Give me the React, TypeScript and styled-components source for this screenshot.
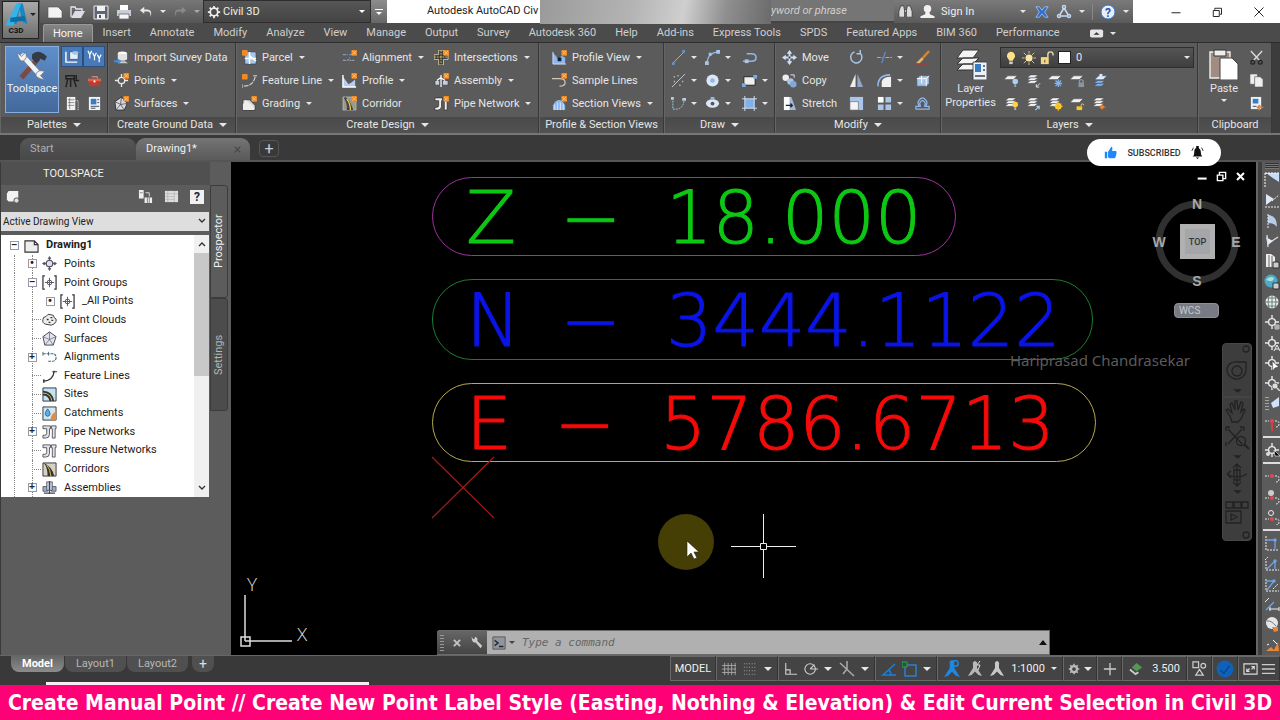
import React, { ReactNode } from 'react';
import styled, { createGlobalStyle, css } from 'styled-components';

const UI = `Roboto, "Noto Sans", sans-serif`;

const Global = createGlobalStyle`
  * { box-sizing: border-box; }
  html, body { margin: 0; height: 100%; background: #383838; }
  body { font: 11px/14px ${UI}; color: #e6e6e6; overflow: hidden; }
  button, input, select { font: inherit; color: inherit; margin: 0; padding: 0; border: 0; background: none; }
  button { cursor: default; white-space: nowrap; }
  svg { display: block; flex: none; }
`;

/* ---------- icon drawings, all on a 16 x 16 grid ---------- */
const W = '#e8e8e8';
const B = '#8fb8e8';
const O = '#f08a24';
const spark = (
  <g>
    <rect x="10" y="0" width="6" height="6" rx="1" fill={O} />
    <path d="M11 1l4 4M15 1l-4 4" stroke="#ffc27a" strokeWidth="1" />
  </g>
);
const sheets = (fill: string) => (
  <g fill={fill} stroke="#444" strokeWidth=".5">
    <path d="M1 11l4-3h8l-4 3z" />
    <path d="M1 8l4-3h8l-4 3z" />
    <path d="M1 5l4-3h8l-4 3z" />
  </g>
);
const target = (c: string) => (
  <g fill="none" stroke={c} strokeWidth="1.4">
    <circle cx="8" cy="8" r="3.4" />
    <path d="M8 1v4M8 11v4M1 8h4M11 8h4" />
  </g>
);
const red = (
  <g>
    <path d="M1 5h4M11 5h2q2 0 2 3t-3 3" fill="none" stroke={W} strokeDasharray="2 1" />
    <circle cx="8" cy="5" r="2" fill="#e8454f" />
  </g>
);
const pipe = (c: string) => (
  <g fill={c} stroke="#333" strokeWidth=".8">
    <path d="M1 2h8v3H8v6q0 4-4 4H1v-3h2q2 0 2-2V5H1z" />
    <path d="M10 2h5v3h-1v10h-3V5h-1z" />
  </g>
);
const person = (c: string) => (
  <path d="M8 0a2.500 2.500 0 0 1 2 3.400L10 7l5 8-3.500-1L8 10.500 4.500 14 1 15l5-8V3.400A2.500 2.500 0 0 1 8 0z" fill={c} />
);

const glyphs: Record<string, ReactNode> = {
  newFile: <path d="M1 3h10l4 4v7H1z" fill="#f3f3f3" stroke="#555" strokeWidth=".6" />,
  open: <g><path d="M1 13V3h4l1 2h6v2" fill="none" stroke={W} strokeWidth="1.3" /><path d="M1 14l4-7h10l-4 7z" fill="#d8dde6" /></g>,
  save: <g><path d="M1 2h14v13H1z" fill="#5d6675" stroke={W} /><path d="M4 2h8v5H4zM4 10h8v5H4z" fill="#f2f2f2" /><path d="M6 11h2v3H6z" fill="#555" /></g>,
  print: <g><path d="M4 1h8v5H4z" fill="#fff" /><path d="M1 6h14v6H1z" fill="#c9ced6" /><path d="M3 10h10v5H3z" fill="#f5f5f5" stroke="#667" strokeWidth=".8" /></g>,
  undo: <path d="M6 2L1 6l5 4V7.500h4q3 0 3 4V14q3-8-3-9H6z" fill={W} />,
  redo: <path d="M10 2l5 4-5 4V7.500H6q-3 0-3 4V14Q0 6 6 5h4z" fill="#8a8a8a" />,
  gear: <g fill="none" stroke="#eee"><circle cx="8" cy="8" r="4.300" strokeWidth="2" /><path d="M8 1v3M8 12v3M1 8h3M12 8h3M3 3l2 2M11 11l2 2M13 3l-2 2M5 11l-2 2" strokeWidth="2" /></g>,
  binoc: <g fill="#ddd" stroke="#333" strokeWidth=".7"><path d="M3 2h3l1 5v7H1V8zM10 2h3l2 6v6H9V7z" /><path d="M7 6h2v3H7z" /></g>,
  user: <g fill="#f0f0f0"><circle cx="8" cy="5" r="4" /><path d="M6 8h4l.5 3 5 2v2H.5v-2l5-2z" /></g>,
  exchange: <path d="M1 2h4l3 4 3-4h4l-4 6 4 6h-4l-3-4-3 4H1l4-6z" fill="#2f6fd0" stroke="#cfe0ff" strokeWidth=".7" />,
  tri: <g fill="none" stroke="#c8daf5" strokeWidth="1.500"><path d="M8 4l5 8H3z" /><circle cx="8" cy="3" r="1.500" fill="#556" /><circle cx="3" cy="12" r="1.500" fill="#556" /><circle cx="13" cy="12" r="1.500" fill="#556" /></g>,
  help: <g><circle cx="8" cy="8" r="7" fill="#e8eefb" stroke="#3e6fc0" /><text x="8" y="12.500" fontSize="12" fontWeight="700" textAnchor="middle" fill="#2a58b0">?</text></g>,
  logo: <g><path d="M5 14L9 1h3l3 13-3-1-2-8-2 9z" fill="#1787c4" /><path d="M1 15L8 1h3L6 15z" fill="#36b4e6" /><path d="M4 10l9-1 1 3-10 1z" fill="#0e6da5" /></g>,

  tools: <g><path d="M3 14L11 5" stroke="#7d4a42" strokeWidth="2.400" /><path d="M8 3q3-3 7 1l-1 2-2-1-2 2-2-2z" fill="#333b44" /><path d="M3 3l9 10" stroke="#f2f2f2" strokeWidth="2.200" /><path d="M1 2l2 2 2-2q1 3-1 4T1 2zM14 15l-2-2 2-2q-3-1-4 1t4 3z" fill="#f2f2f2" stroke="#777" strokeWidth=".4" /></g>,
  tsA: <g><path d="M1 3v11h12" fill="none" stroke="#fff" strokeWidth="1.500" /><path d="M5 3h9v8H5z" fill="#e9f0fa" stroke="#234" strokeWidth=".6" /><ellipse cx="11" cy="4" rx="3.500" ry="2" fill="#9fc6ef" /></g>,
  yyy: <path d="M1 2l2 4 2-4M3 6v4M6 4l2 4 2-4M8 8v4M11 6l2 4 2-4M13 10v4" fill="none" stroke="#fff" strokeWidth="1.300" />,
  survey: <path d="M1 3h9v3H1zM3 6l-2 9M6 6v9M9 6l3 9M12 2v5M10 8h5" fill="none" stroke="#222" strokeWidth="1.600" />,
  toolbox: <g><path d="M5 4h6v2" fill="none" stroke="#e8a49b" /><path d="M1 6h14v3H1z" fill="#e0614d" /><path d="M2 9h12v5H2z" fill="#c23b2a" /><path d="M7 8h2v2H7z" fill="#fff" /></g>,
  sheetA: <g><path d="M2 1h9v14H2z" fill="#f2f2f2" /><path d="M3 4h7M3 7h7M3 10h7M5 2v12" stroke="#777" strokeWidth=".8" /><path d="M11 5h3v10" stroke={W} fill="none" strokeDasharray="1 1" /></g>,
  sheetB: <g><path d="M2 1h12v14H2z" fill="#eef3fa" /><path d="M4 3h6v6H4z" fill="#3b7bc4" /><path d="M11 4h2M11 7h2M4 11h9M4 13h5" stroke="#444" strokeWidth="1" /></g>,
  importS: <g><ellipse cx="9" cy="4" rx="5" ry="2.500" fill="#fff" /><path d="M4 4h10v6q-5 3-10 0z" fill="#e2e2e2" /><path d="M6 12h6l3 2H5z" fill="#ccc" /><path d="M0 11h4V9l4 3-4 3v-2H0z" fill="#3d8fe0" /></g>,
  points: <g>{target(W)}{spark}</g>,
  surface: <g><path d="M1 6l7-5 6 7-3 7H2z" fill="#d6dbe4" stroke="#333" /><path d="M1 6l6 3 7-1M7 9L2 15M7 9l4 6M7 9l1-8" stroke="#444" fill="none" strokeWidth=".8" />{spark}</g>,
  parcel: <g><path d="M3 2h12v13H3z" fill="#a9c6e6" stroke="#345" strokeWidth=".8" /><path d="M8 2v13M3 9h12M8 6l7 6" stroke="#fff" strokeWidth="1.500" /><rect x="0" y="0" width="6" height="6" rx="1" fill={O} /></g>,
  fline: <g><path d="M2 14q10 0 12-10" fill="none" stroke="#ccc" strokeWidth="1.300" strokeDasharray="5 1" /><path d="M12 3h4M0 12v4" stroke={W} /><rect x="0" y="1" width="6" height="6" rx="1" fill={O} /></g>,
  grading: <g><path d="M1 4h7l6 6v5H1z" fill="#d9d9d9" stroke="#333" strokeWidth=".8" /><path d="M4 4l9 8v3H1V9z" fill="#eee" />{spark}</g>,
  align: <g><path d="M1 5h5M8 5h3M1 11h4q3 0 3-3" fill="none" stroke={B} strokeDasharray="3 1" /><path d="M8 11h6" stroke="#bbb" strokeDasharray="2 1" />{spark}</g>,
  profile: <g><path d="M1 3v12h13V7l-4 3-3 2-3-4-3-4z" fill="#b7cdf0" /><path d="M1 2v13h14" stroke="#fff" fill="none" strokeWidth="1.500" />{spark}</g>,
  corridor: <g><path d="M1 1h14v14H1z" fill="#9a9a8c" stroke="#ccc" strokeWidth=".6" /><path d="M4 1q6 6 8 14H5Q6 8 2 2z" fill="#444" /><path d="M5 3q4 5 4 12" stroke="#f5cf3a" fill="none" strokeWidth="1.300" />{spark}</g>,
  inter: <g><path d="M5 0h5v5h5v5h-5v6H5v-6H0V5h5z" fill="#333" stroke="#cfc9b0" /><path d="M7.500 0v15M0 7.500h15" stroke="#f3d060" strokeDasharray="2 1" />{spark}</g>,
  assembly: <g><path d="M1 8h5v5H1zM9 8h6v5H9z" fill="#c3cfe0" stroke="#333" strokeWidth=".7" /><path d="M7.500 2v13M3 8l4-3 5 3" stroke="#fff" fill="none" strokeWidth="1.300" />{spark}</g>,
  pipes: <g>{pipe('#f0f0f0')}{spark}</g>,
  pview: <g><path d="M1 3v12h13V8l-4-2-3 4-3-4z" fill="#8fb4ee" /><path d="M1 2v13h14" stroke="#cfe0ff" fill="none" /><path d="M6 8h4v4H6z" fill="#123" />{spark}</g>,
  sline: <g><path d="M0 6h8q6 0 6 4t-6 4" fill="none" stroke="#d0c8b8" strokeWidth="1.300" />{spark}</g>,
  sview: <g><path d="M1 10q4-8 10-5l3 5v5H1z" fill="#8fb8ee" /><path d="M3 9v6M6 7v8M9 7v8M12 8v7" stroke="#eef" strokeWidth=".8" />{spark}</g>,

  line: <g><path d="M2 14L14 2" stroke={B} /><path d="M1 13h3v3H1zM12 0h3v3h-3z" fill="#6b8fc0" /></g>,
  pline: <g><path d="M2 14Q3 3 14 2" fill="none" stroke={B} strokeWidth="1.500" /><path d="M0 12h4v4H0zM12 0h4v4h-4zM4 3h3v3H4z" fill="#a9c6ea" /></g>,
  arc: <g><path d="M1 12h4M4 12h6q5 0 5-4t-5-4H5" fill="none" stroke={B} strokeWidth="1.600" /><path d="M3 10h4v4H3z" fill="#a9c6ea" /></g>,
  xline: <g><path d="M1 15L15 1" stroke="#ccc" /><path d="M3 4h1M7 3h1M12 9h1M9 13h1M3 9h1" stroke="#ddd" strokeWidth="1.500" /></g>,
  circle: <g><circle cx="8" cy="8" r="6.500" fill="#dce6f4" /><circle cx="8" cy="8" r="2.500" fill="#8fb8e8" /></g>,
  rect: <g><path d="M2 4h12v9H2z" fill="#f1f1f1" stroke="#222" /><path d="M0 11h4v4H0zM12 2h4v4h-4z" fill="#7fa8dc" /></g>,
  spline: <g><path d="M2 2v12h5Q14 12 14 3" fill="none" stroke="#9cd0e0" strokeDasharray="2 1" /><path d="M12 2h4v3h-4zM0 1h3v3H0z" fill="#bcd" /></g>,
  ellipse: <g><ellipse cx="8" cy="8" rx="7" ry="4.500" fill="#dce6f4" /><circle cx="8" cy="8" r="2" fill="#555" /><path d="M6 1h4v3H6z" fill="#8fb8e8" /></g>,
  hatch: <g><path d="M3 3h10v10H3z" fill="#7fb0ea" /><path d="M3 0v16M13 0v16M0 3h16M0 13h16" stroke="#d5e3f5" /></g>,
  move: <g><path d="M8 0l3 4H9v3h3V5l4 3-4 3V9H9v3h2l-3 4-3-4h2V9H4v2L0 8l4-3v2h3V4H5z" fill="#cfe0f6" /><path d="M7 7h2v2H7z" fill="#333" /></g>,
  copy: <g><circle cx="4" cy="5" r="3.500" fill="#eee" /><circle cx="9" cy="9" r="3.500" fill="#a9c6ea" /><circle cx="12" cy="12" r="3.500" fill="#7fa8dc" /><path d="M9 2h4v3" stroke={W} fill="none" /></g>,
  stretch: <g><path d="M7 1h3l5 14H7z" fill="#9fb9d8" /><path d="M2 1h6v14H2z" fill="#fff" /><path d="M4 10h7M9 8l2 2-2 2" stroke="#222" fill="none" strokeWidth="1.400" /></g>,
  rotate: <path d="M6 2a6 6 0 1 0 6 1.500M12 0v4H8" fill="none" stroke="#a9c6ea" strokeWidth="1.600" />,
  mirror: <g><path d="M7 1v14H1z" fill="#eee" /><path d="M9 1v14h6z" fill="#8fa8c8" /></g>,
  scale: <g><path d="M1 1h14v14H1z" fill="#a9c6ea" /><path d="M1 6h9v9H1z" fill="#f4f4f4" stroke="#555" strokeWidth=".6" /></g>,
  trim: <g><path d="M0 8h6M9 8h7" stroke={B} strokeDasharray="4 1" /><path d="M5 14L9 2" stroke="#5f8fd0" strokeWidth="1.400" /></g>,
  fillet: <g><path d="M5 15V9q1-5 10-5v11z" fill="#f0f0f0" /><path d="M1 14Q1 2 14 2" fill="none" stroke={B} strokeWidth="1.700" /></g>,
  array: <g fill="#a9c6ea"><path d="M1 1h6v6H1z" fill="#fff" /><path d="M9 1h6v6H9zM1 9h6v6H1zM9 9h6v6H9z" /></g>,
  erase: <g><path d="M15 1L7 10" stroke="#d9822b" strokeWidth="2.600" /><path d="M7 8l2 2-4 4H1z" fill="#e8b36d" /><path d="M1 15h12" stroke="#b33" /></g>,
  explode: <g><path d="M2 6l3-3h10v8l-3 3H2z" fill="#a9c6ea" stroke="#456" strokeWidth=".6" /><path d="M2 6h10v8M12 6l3-3M7 3v8" stroke="#fff" fill="none" /></g>,
  offset: <g fill="none" stroke={B} strokeWidth="1.300"><path d="M1 14h14v-3h-4q3-3 1-6-4-6-8 0-2 3 1 6H1z" /><path d="M6 11q-2-3 0-5 2-2 4 0 2 2 0 5" /></g>,

  layerProps: <g><path d="M1 11l3-3h8l-3 3zM1 8l3-3h8L9 8zM1 5l3-4h8L9 5z" fill="#f4f4f4" stroke="#333" strokeWidth=".5" /><path d="M9 7h7v9H9z" fill="#e9f1fb" stroke="#333" strokeWidth=".4" /><path d="M10 8h3v4h-3z" fill="#3b7bc4" /><path d="M14 9h1M14 11h1M10 14h5" stroke="#444" strokeWidth=".7" /></g>,
  bulb: <g><path d="M8 1a4.500 4.500 0 0 1 3 8l-1 2H6L5 9a4.500 4.500 0 0 1 3-8z" fill="#fbe28a" /><path d="M6 12h4v3H6z" fill="#ccc" /></g>,
  sun: <g><circle cx="8" cy="8" r="4" fill="#fbe6a5" /><path d="M8 0v3M8 13v3M0 8h3M13 8h3M2 2l3 3M11 11l3 3M14 2l-3 3M5 11l-3 3" stroke="#e0d0a0" /></g>,
  unlock: <g><path d="M1 7h9v8H1z" fill="#f4d982" /><path d="M9 7V4q0-3 3-3t3 4" fill="none" stroke="#eadcae" strokeWidth="1.600" /><path d="M5 10h1v3H5z" fill="#333" /></g>,
  ly1: <g><path d="M0 7l4-4h10l-4 4z" fill="#f0f0f0" stroke="#444" strokeWidth=".5" /><circle cx="12" cy="9" r="3" fill="#a9d0f5" /><path d="M11 12h2v3h-2z" fill="#8ab" /></g>,
  ly2: <g>{sheets('#eaf1fa')}<path d="M15 11l-4 4M11 12v3h3" stroke={W} fill="none" /></g>,
  ly3: <g><path d="M0 7l4-4h10l-4 4z" fill="#f0f0f0" stroke="#444" strokeWidth=".5" /><path d="M11 7v8M7 11h8M8 8l6 6M14 8l-6 6" stroke="#7fb6f0" strokeWidth="1.300" /></g>,
  ly4: <g><path d="M0 7l4-4h10l-4 4z" fill="#f0f0f0" stroke="#444" strokeWidth=".5" /><path d="M9 10h6v5H9z" fill="#8a949f" /><path d="M10 10V8q2-2 4 0v2" stroke="#aab" fill="none" /></g>,
  ly5: <g><g transform="translate(1 3)">{sheets('#7fb0ea')}</g><path d="M3 7l4-4h9l-4 4z" fill="#dcebff" stroke="#345" strokeWidth=".5" /><path d="M8 1h3v3H8z" fill="#dcebff" /></g>,
  ly6: <g>{sheets('#f4f4f4')}<circle cx="12" cy="9" r="3" fill="#ffd24d" /><path d="M11 12h2v3h-2z" fill="#caa" /></g>,
  ly7: <g>{sheets('#f4f4f4')}<path d="M10 15l4-4M11 11h3v3" stroke="#a9d0f5" fill="none" strokeWidth="1.300" /></g>,
  ly8: <g>{sheets('#f4f4f4')}<circle cx="11" cy="11" r="3.500" fill="#ffd83d" /><path d="M11 6v10M6 11h10M8 8l6 6M14 8l-6 6" stroke="#f0b92b" strokeWidth=".9" /></g>,
  ly9: <g><path d="M0 7l4-4h10l-4 4z" fill="#f0f0f0" stroke="#444" strokeWidth=".5" /><path d="M7 11h6v4H7z" fill="#f7c928" /><path d="M12 11V9q2-2 3 1" stroke="#f7c928" fill="none" /></g>,
  ly10: <g>{sheets('#f4f4f4')}<path d="M8 12l3-3 2 2 2 1-3 1-1 2z" fill="#e8863a" stroke="#b8561a" strokeWidth=".6" /></g>,
  paste: <g><path d="M1 2h10v13H1z" fill="#a08c80" stroke="#eee" strokeWidth=".7" /><path d="M3 1h6v3H3z" fill="#eee" stroke="#333" strokeWidth=".5" /><path d="M6 5h6l3 3v8H6z" fill="#fff" stroke="#444" strokeWidth=".5" /></g>,
  cut: <g fill="none" stroke="#ddd" strokeWidth="1.400"><path d="M2 1l9 10M14 1L5 11" /><circle cx="4" cy="13" r="2" stroke="#222" /><circle cx="12" cy="13" r="2" stroke="#222" /></g>,
  copyc: <g fill="#eee" stroke="#555" strokeWidth=".7"><path d="M1 1h8v11H1z" /><path d="M6 4h6l3 3v8H6z" /></g>,
  match: <g><path d="M2 1h11v13H2z" fill="#e9f1fb" /><path d="M4 3h6v5H4z" fill="#3b7bc4" /><path d="M4 11h4" stroke="#444" /><path d="M8 12l3-3 2 2 3 1-4 1-1 3z" fill="#e8863a" /></g>,

  tsNew: <g><path d="M3 1h11v12H3l-2-2V4z" fill="#f2f2f2" /><circle cx="12" cy="12" r="3" fill="#ddd" stroke="#444" /></g>,
  tsView: <g fill="#eee"><path d="M1 1h5v9H1zM7 9h8v6H7z" /><path d="M8 4h4v4" stroke="#ddd" fill="none" /><path d="M2 4h3M10 9v6M12 9v6" stroke="#666" strokeWidth=".8" /></g>,
  tsGrid: <g><path d="M1 2h14v12H1z" fill="#ddd" /><path d="M1 5h14M1 8h10M1 11h10M4 2v12M11 2v12" stroke="#aaa" strokeWidth=".6" /></g>,
  doc: <path d="M1 3h10l4 4v8H1zM11 3v4h4" fill="#eee" stroke="#333" strokeWidth="1.200" />,
  tPoints: <g>{target('#556')}<path d="M6 6h4v4H6z" fill="#dde" /><path d="M8 0l2 3H6zM8 16l2-3H6zM0 8l3-2v4zM16 8l-3-2v4z" fill="#556" /></g>,
  tGroup: <g><path d="M3 1H1v14h2M13 1h2v14h-2" stroke="#333" fill="none" strokeWidth="1.300" /><circle cx="8" cy="8" r="2.500" fill="none" stroke="#556" /><path d="M8 3v10M3 8h10" stroke="#556" /></g>,
  tCloud: <g><path d="M4 13q-4-1-3-5 0-3 3-3 2-4 6-2 3 0 3 3 3 1 2 4t-5 4z" fill="#eee" stroke="#333" /><path d="M5 8h2M9 6h2M7 11h2M10 9h2" stroke="#333" strokeWidth="1.400" /></g>,
  tSurf: <g><path d="M1 6l7-5 7 5-3 9H3z" fill="#e3e6ee" stroke="#445" /><path d="M1 6l7 3 7-3M8 9L3 15M8 9l4 6M8 1v8" stroke="#556" strokeWidth=".7" fill="none" /></g>,
  tAlign: <g><path d="M1 4h10q4 0 4 4t-4 4H6" fill="none" stroke="#467" strokeWidth="1.200" strokeDasharray="3 1" /><path d="M1 2v4M7 2v4" stroke="#467" /></g>,
  tFeat: <path d="M1 14q11 0 12-11M11 4h5M2 12v4" fill="none" stroke="#333" strokeWidth="1.300" />,
  tSite: <g><path d="M1 1h14v14H1z" fill="#bfe4f5" stroke="#333" /><path d="M1 4q10 0 12 11H8Q7 9 1 9z" fill="#333" /><path d="M1 6.500q8 0 9.500 8" stroke="#e9c93a" fill="none" /></g>,
  tCatch: <g><path d="M1 1h14v14H1z" fill="#cfe8f8" stroke="#333" /><path d="M15 6q-5 1-6 9h6z" fill="#e88b3c" /><path d="M6 3q4 5 2 7-2 2-4 0T6 3z" fill="#58b0ea" stroke="#246" strokeWidth=".7" /></g>,
  tPipe: pipe('#dfe3ea'),
  tCorr: <g><path d="M1 1h14v14H1z" fill="#d5d2c4" stroke="#333" /><path d="M2 1q9 4 11 14H6Q6 6 2 1z" fill="#333" /><path d="M5 3q4 5 4.500 12" stroke="#e9c93a" fill="none" /></g>,
  tAsm: <g><path d="M1 7h5v5H1zM10 7h5v5h-5z" fill="#9fb0cc" stroke="#333" strokeWidth=".7" /><path d="M5 2h6v9H5z" fill="#c6d0e0" stroke="#445" strokeWidth=".8" /><path d="M8 1v14M2 14h12" stroke="#445" strokeWidth="1.300" /></g>,

  s1: <g><path d="M1 1h14v9z" fill="#c9dcf5" /><path d="M1 1v14M1 1h14" stroke="#fff" strokeDasharray="2 1" /><path d="M3 2l10 9" stroke="#456" /></g>,
  s2: <g><path d="M2 2l8 5-8 6z" fill="#dfe9f8" /><path d="M1 15h14M8 9l7-6" stroke="#eee" strokeDasharray="2 1" /></g>,
  s3: <g><path d="M4 2q9 0 9 12-3-4-9-4z" fill="#b8cde8" /><path d="M4 1v14" stroke="#eee" strokeDasharray="2 1" /></g>,
  s4: <g><path d="M2 4l7 4-5 4z" fill="#dfe9f8" /><path d="M3 2l1 12M8 8l6-4" stroke="#ddd" strokeWidth="1.300" /></g>,
  s5: <g><path d="M2 1h5l4 3v10H2z" fill="#eee" /><path d="M5 2v12M8 3v11" stroke="#666" /><path d="M9 9h6v6H9z" fill="#ccc" stroke="#333" /></g>,
  s6: <g><circle cx="7" cy="7" r="6.500" fill="#4fa9c8" /><path d="M2 6q4-5 8-2-1 5-8 2z" fill="#a9e3d8" /><path d="M9 9h6v6H9z" fill="#ccc" stroke="#333" /></g>,
  s7: <g><circle cx="8" cy="8" r="6.500" fill="#e4eee0" /><path d="M8 1v14M1 8h14M3 4h10M3 12h10M5 2q-2 6 0 12M11 2q2 6 0 12" stroke="#567" fill="none" strokeWidth=".8" /></g>,
  s8: <g>{target(W)}<path d="M10 12h6M10 14h6M12 10v6M14 10v6" stroke="#ddd" strokeWidth=".8" /></g>,
  s9: <g>{target(W)}<path d="M10 16l3-6 3 6M11 14h4" stroke="#eee" fill="none" /></g>,
  s10: <g>{target(W)}<path d="M8 6l7 6-4 1-2 3z" fill="#fff" stroke="#333" strokeWidth=".6" /></g>,
  s11: <g>{target(W)}<circle cx="11" cy="11" r="3" fill="#ddd" stroke="#444" strokeWidth=".6" /><path d="M13 13l3 3" stroke="#ddd" strokeWidth="1.500" /></g>,
  s12: <g><path d="M7 8l8-6v9l-6 2z" fill="#cfe2fa" /><path d="M2 2v13M4 2v13" stroke="#eee" strokeDasharray="1 2" /></g>,
  s13: <g>{red}<path d="M7 6h2v9H7z" fill="#d63c46" /></g>,
  s14: <g>{target(W)}<path d="M10 8l6 6h-5z" fill="#000" stroke="#fff" strokeWidth=".6" /><circle cx="4" cy="12" r="2" fill="#ddd" /></g>,
  s15: <g transform="translate(0 3)">{red}</g>,
  s16: <g transform="translate(0 4)">{red}<circle cx="7" cy="0" r="3" fill="#ccc" /></g>,
  s17: <g transform="translate(0 5)">{red}<circle cx="7" cy="-1" r="2.500" fill="none" stroke="#eee" /></g>,
  s18: <g fill="none"><path d="M2 1v14h13" stroke="#eee" strokeDasharray="2 1" /><path d="M2 5h9v9" stroke="#6fa3e8" strokeWidth="1.300" /><circle cx="11" cy="5" r="1.700" fill="#6fa3e8" /></g>,
  s19: <g fill="none"><path d="M2 6v9h13M1 5l3-3" stroke="#eee" strokeDasharray="2 1" /><path d="M3 14l8-8v8" stroke="#6fa3e8" strokeWidth="1.300" /><circle cx="11" cy="6" r="1.700" fill="#6fa3e8" /></g>,
  s20: <g fill="none"><path d="M2 3v12h13M9 13l5-5" stroke="#eee" strokeDasharray="2 1" /><path d="M2 5h8L3 14" stroke="#6fa3e8" strokeWidth="1.300" /><circle cx="10" cy="5" r="1.700" fill="#6fa3e8" /></g>,
  s21: <g fill="none"><path d="M1 6l4-4M5 13h10M6 11v4M15 11v4" stroke="#eee" /><path d="M2 14l8-8" stroke="#6fa3e8" strokeWidth="1.300" /></g>,
  s22: <g><circle cx="8" cy="7" r="6" fill="#e6e6e6" /><path d="M3 5q4-1 9 5" stroke="#777" fill="none" /><path d="M8 11h6v4l-4 1z" fill="#e8863a" /></g>,
  s23: <g><path d="M2 14l5-4 3 3 4-8 1 9z" fill="#e8863a" /><path d="M9 3l4 4M3 8l2-1" stroke="#fff" /></g>,

  grid: <path d="M3 1v14M7 1v14M11 1v14M15 1v14M0 4h16M0 8h16M0 12h16" stroke="#aaa" strokeWidth="1" />,
  dots: <path d="M1 2h15M1 6h15M1 10h15M1 14h15" stroke="#aaa" strokeWidth="1.300" strokeDasharray="1 2" />,
  ortho: <path d="M2 1v13h13M2 9h5v5" fill="none" stroke="#ccc" strokeWidth="1.300" />,
  polar: <g fill="none" stroke="#ccc" strokeWidth="1.300"><circle cx="7" cy="8" r="6" /><path d="M7 8h9M7 8l5-5" /></g>,
  iso: <path d="M8 0v8M1 2l14 13M4 13L8 8" stroke="#aaa" strokeWidth="1.500" fill="none" />,
  angle: <path d="M14 3L2 14h13M7 9q3 1 3 5" fill="none" stroke="#1c7ddb" strokeWidth="1.600" />,
  osnap: <g><path d="M3 4h11v11H3z" fill="none" stroke="#2b7fd0" strokeWidth="1.500" /><path d="M0 1h5v5H0z" fill="#1d5c33" stroke="#3a9a5a" /></g>,
  annoB: <g>{person('#1e88e5')}<circle cx="11" cy="3" r="2.500" fill="none" stroke="#1e88e5" strokeWidth="1.300" /></g>,
  annoG: <g>{person('#b8b8b8')}<path d="M13 0l-3 4h3l-2 5" stroke="#ddd" fill="none" /></g>,
  annoW: person('#c8c8c8'),
  cog: <g><circle cx="8" cy="8" r="4" fill="none" stroke="#bbb" strokeWidth="3" /><path d="M8 1v3M8 12v3M1 8h3M12 8h3M3 3l2 2M11 11l2 2M13 3l-2 2M5 11l-2 2" stroke="#bbb" strokeWidth="2" /></g>,
  plus: <path d="M8 1v14M1 8h14" stroke="#ccc" strokeWidth="1.500" />,
  layersG: <g><path d="M3 7l5-5 6 5-6 4z" fill="#4f9a52" /><path d="M1 9l6 5 3-2" fill="none" stroke="#ccc" strokeWidth="2" /></g>,
  shapes: <g fill="none" stroke="#ccc" strokeWidth="1.300"><path d="M1 1h6v6H1zM8 9l4 6H4z" /><circle cx="12" cy="5" r="2.500" /></g>,
  bigDot: <g><circle cx="8" cy="8" r="7.500" fill="#0f62b8" /><path d="M4 9l3 3 5-7" stroke="#0a4a92" fill="none" strokeWidth="1.500" /></g>,
  expand: <path d="M1 3h14v11H1zM4 8v3h3M4 11l3-3M12 9V6H9M12 6L9 9" fill="none" stroke="#ddd" strokeWidth="1.200" />,
  burger: <path d="M1 3h15M1 8h15M1 13h15" stroke="#ccc" strokeWidth="1.700" />,
  thumb: <path d="M1 7h3v8H1zM5 7l4-6q2 0 1 5h5q1 1 0 5l-1 3-1 1H7l-2-1z" fill="#1e88ff" />,
  bell: <g><path d="M8 2q4 1 4 5t2 6H2q2-1 2-6t4-5zM6 14h4l-2 2z" fill="#111" /><path d="M7 0h2v3H7zM3 2L1 6M13 2l2 4" stroke="#111" /></g>,
  wrench: <path d="M2 1l2 3 2-1 0-2q4 1 3 5l6 6-2 3-6-7Q2 9 2 1z" fill="#ccc" />,
  prompt: <g><path d="M1 1h14v14H1z" fill="#8f969e" stroke="#555" /><path d="M3 5l4 3-4 3M8 12h5" fill="none" stroke="#223" strokeWidth="1.500" /></g>,
  minimize: <path d="M1 11h13" stroke="#fff" strokeWidth="3" />,
  restore: <g fill="none" stroke="#fff" strokeWidth="2"><path d="M2 6h8v8H2zM5 5V2h9v9h-3" /></g>,
  close: <path d="M3 3l10 10M13 3L3 13" stroke="#fff" strokeWidth="3" />,
  closeDim: <path d="M3 3l10 10M13 3L3 13" stroke="#c4c4c4" strokeWidth="3" />,
  tabX: <path d="M3 3l10 10M13 3L3 13" stroke="#444" strokeWidth="2" />,
  wMin: <path d="M2 9h12" stroke="#222" strokeWidth="1.300" />,
  wMax: <path d="M3 6h8v8H3zM5 5V3h9v8h-2" fill="none" stroke="#222" strokeWidth="1.300" />,
  wClose: <path d="M2 2l12 12M14 2L2 14" stroke="#222" strokeWidth="1.300" />,
  ribbonBox: <g><rect x="0" y="4" width="15" height="9" rx="2" fill="#e5e5e5" /><path d="M4 10l3.500-3 3.500 3z" fill="#333" /></g>,
};

const Icon = ({ n, size = 15 }: { n: string; size?: number }) => (
  <svg width={size} height={size} viewBox="0 0 16 16" aria-hidden="true">{glyphs[n]}</svg>
);

const Caret = styled.i<{ $big?: boolean; $c?: string }>`
  flex: none;
  border-left: ${p => (p.$big ? 4 : 3)}px solid transparent;
  border-right: ${p => (p.$big ? 4 : 3)}px solid transparent;
  border-top: ${p => (p.$big ? 4 : 3)}px solid ${p => p.$c || '#e6e6e6'};
`;

/* ---------- frame ---------- */
const Frame = styled.div`display: flex; flex-direction: column; height: 100vh; min-height: 560px; position: relative; overflow: hidden;`;

const Header = styled.header`
  flex: none; display: grid; grid-template-columns: 40px minmax(0, 1fr); grid-template-rows: 24px 18px;
  background: #4b4b4b;
`;
const AppButton = styled.button`
  grid-row: 1 / 3; margin: 1px 1px 3px 2px; border: 1px solid #222; background: linear-gradient(#a9a9a9, #6f6f6f);
  display: grid; grid-template-columns: 26px 8px; grid-template-rows: 24px 10px; align-items: center; justify-items: center;
  color: #111; font-size: 8px; line-height: 10px; font-weight: 700;
`;
const TitleBar = styled.div`display: flex; align-items: stretch; height: 24px; background: #4b4b4b; min-width: 0; padding-bottom: 1px;`;
const metal = css`background: linear-gradient(#8d8d8d, #666);`;
const QuickBar = styled.div`
  flex: none; width: 163px; padding-left: 7px; display: flex; align-items: center; justify-content: flex-start; gap: 7px;
  background: linear-gradient(#777, #565656);
`;
const IconButton = styled.button`display: flex; align-items: center; justify-content: center; gap: 7px; flex: none;`;
const Workspace = styled.button`
  flex: none; width: 168px; padding: 0 5px 0 3px; display: flex; align-items: center; gap: 2px; color: #f0f0f0;
  background: linear-gradient(#565656, #444); border: 1px solid #2e2e2e;
  & > span { flex: 1; text-align: left; }
`;
const Customize = styled.button`
  ${metal} flex: none; width: 16px; display: flex; flex-direction: column; gap: 2px; align-items: center; justify-content: center;
  &::before { content: ''; width: 8px; height: 1px; background: #fff; }
`;
const Title = styled.div`
  flex: 1; min-width: 0; overflow: hidden; white-space: nowrap; background: #fff; color: #222; padding-left: 40px;
  font-size: 11px; line-height: 22px;
`;
const Smudge = styled.div`
  flex: none; width: 231px; height: 24px; background: linear-gradient(100deg, #9a9a9a, #b4b4b4 40%, #cfcfcf 62%, #8f8f8f 80%, #6a6a6a);
`;
const Search = styled.input`
  flex: none; width: 123px; background: #757575; border-bottom: 2px solid #444; font-style: italic;
  &::placeholder { color: #d0d0d0; opacity: 1; }
`;
const Account = styled.div`
  flex: none; width: 239px; padding: 0 4px; background: linear-gradient(#7a7a7a, #5a5a5a); display: flex; align-items: center; gap: 7px;
`;
const SignIn = styled.button`flex: 1; display: flex; align-items: center; justify-content: space-between; padding-right: 2px; color: #eee;`;
const SignInLabel = styled.span`display: flex; align-items: center; gap: 6px;`;
const VLine = styled.i`width: 1px; height: 16px; background: #888;`;
const WindowButtons = styled.div`flex: none; width: 147px; background: #fff; display: flex; justify-content: space-around; align-items: center; padding-left: 22px;`;

const Tabs = styled.nav`display: flex; align-items: stretch; gap: 1px; padding-left: 3px; overflow: hidden;`;
const Tab = styled.button<{ $on?: boolean }>`
  padding: 0 9px; color: ${p => (p.$on ? '#f4f4f4' : '#cfcfcf')};
  ${p => p.$on && css`background: linear-gradient(#858585, #686868); border: 1px solid #999; border-bottom: 0; border-radius: 2px 2px 0 0;`}
`;
const RibbonToggle = styled.button`display: flex; align-items: center; gap: 6px; margin-left: 20px;`;

/* ---------- ribbon ---------- */
const Ribbon = styled.section`
  flex: none; display: flex; height: 93px; background: #3c3c3c; border-top: 1px solid #2d2d2d; border-bottom: 2px solid #777; overflow: hidden;
`;
const PanelBox = styled.div<{ $w: number }>`
  flex: 0 0 ${p => p.$w}px; display: flex; flex-direction: column; border-right: 1px solid #383838; border-left: 1px solid #656565; min-width: 0;
`;
const PanelBody = styled.div<{ $pad: number }>`
  flex: 1; background: #5b5b5b; padding: 3px 0 0 ${p => p.$pad}px; display: flex; min-height: 0;
`;
const PanelTitle = styled.button`
  flex: none; height: 16px; background: linear-gradient(#4a4a4a, #525252); display: flex; align-items: center; justify-content: center; gap: 6px;
`;
const Column = styled.div<{ $w?: number }>`
  flex: 0 0 ${p => (p.$w ? p.$w + 'px' : 'auto')}; display: grid; grid-template-rows: repeat(3, 23px); align-items: center; justify-items: start;
`;
const Cmd = styled.button<{ $gap?: number }>`
  display: flex; align-items: center; gap: ${p => p.$gap ?? 5}px; height: 20px;
  & > i { margin-left: 1px; }
`;
const Toolspace = styled.button`
  flex: 0 0 54px; height: 67px; border: 1px solid #86aee0; background: linear-gradient(#5f8fcb, #44699c); color: #f5f5f5;
  display: flex; flex-direction: column; align-items: center; justify-content: flex-start; padding-top: 1px; margin-right: 2px;
`;
const IconGrid = styled.div<{ $cols: number; $w: number }>`
  display: grid; grid-template-columns: repeat(${p => p.$cols}, ${p => p.$w}px); grid-auto-rows: 23px;
`;
const Cell = styled.button<{ $on?: boolean }>`
  display: flex; align-items: center; justify-content: center;
  ${p => p.$on && css`background: #4879b8; border: 1px solid #2c4f80; margin-bottom: 2px;`}
`;
const BigButton = styled.button<{ $w: number }>`
  flex: 0 0 ${p => p.$w}px; height: 70px; display: flex; flex-direction: column; align-items: center; line-height: 14px; padding-top: 2px;
  & > span { white-space: pre-line; text-align: center; margin-top: 2px; }
  & > i { margin-top: 3px; }
`;
const LayerArea = styled.div`flex: 1; display: flex; flex-direction: column; padding: 0 3px 0 3px; min-width: 0;`;
const LayerCombo = styled.button`
  height: 21px; flex: none; margin: 1px 0; display: flex; align-items: center; gap: 4px; padding: 0 3px 0 3px; background: linear-gradient(#555, #3f3f3f);
  border: 1px solid #2e2e2e;
  & > span { flex: 1; text-align: left; margin-left: 1px; }
`;
const Swatch = styled.i`width: 13px; height: 13px; background: #fff; border: 1px solid #222;`;

/* ---------- document tabs ---------- */
const DocTabs = styled.nav`flex: none; height: 27px; display: flex; align-items: flex-end; padding: 0 0 0 20px; background: #393939; border-bottom: 2px solid #555;`;
const DocTab = styled.button<{ $on?: boolean; $w: number }>`
  flex: 0 0 ${p => p.$w}px; height: 22px; padding: 0 8px 0 10px; display: flex; align-items: center; justify-content: space-between;
  border-radius: 9px 9px 0 0; color: ${p => (p.$on ? '#f0f0f0' : '#b0b0b0')};
  background: ${p => (p.$on ? 'linear-gradient(#747474, #5a5a5a)' : 'linear-gradient(#565656, #484848)')};
`;
const AddTab = styled.button`width: 20px; height: 17px; margin: 0 0 3px 9px; border: 1px solid #555; border-radius: 4px; font-size: 16px; line-height: 14px; color: #ccc;`;

/* ---------- work area ---------- */
const Main = styled.main`flex: 1; display: flex; min-height: 0;`;
const Side = styled.aside`flex: 0 0 231px; background: #5c5c5c; display: grid; grid-template-columns: 209px 21px; border-left: 1px solid #3a3a3a; align-content: start;`;
const SidePanel = styled.div`display: flex; flex-direction: column; min-width: 0;`;
const SideTitle = styled.h2`margin: 0; height: 23px; padding-left: 42px; font: inherit; line-height: 24px; color: #f0f0f0; background: #505050;`;
const SideTools = styled.div`height: 27px; display: flex; align-items: center; gap: 11px; padding: 0 6px 4px 5px; & > :first-child { margin-right: auto; }`;
const HelpBox = styled.button`width: 14px; height: 14px; background: #f0f0f4; color: #223; font-weight: 700; font-size: 12px; line-height: 14px;`;
const View = styled.select`
  height: 19px; width: 208px; padding-left: 2px; background: #dedede; color: #222; appearance: none; border-radius: 0; font-family: Roboto, sans-serif; font-size: 10px;
`;
const ViewWrap = styled.label`position: relative; display: block; height: 23px; & > svg { position: absolute; right: 4px; top: 5px; pointer-events: none; }`;
const TreeBox = styled.div`display: flex; height: 262px; background: #fff; width: 208px; color: #1c1c1c;`;
const Tree = styled.ul`flex: 1; margin: 0; padding: 1px 0 0 4px; list-style: none; display: grid; grid-auto-rows: minmax(0, 1fr);`;
const Node = styled.li<{ $bold?: boolean }>`display: flex; align-items: center; font-weight: ${p => (p.$bold ? 700 : 400)}; white-space: nowrap; & > svg { margin: 0 7px 0 1px; }`;
const Guide = styled.i<{ $line?: boolean }>`
  flex: none; width: 18px; align-self: stretch; display: flex; align-items: center; justify-content: center; position: relative;
  ${p => p.$line && css`&::before { content: ''; position: absolute; left: 9px; top: 0; bottom: 0; border-left: 1px dotted #888; }`}
`;
const Expander = styled.i`
  width: 9px; height: 9px; border: 1px solid #99a; background: #fff; position: relative; font: 700 10px/7px "Liberation Mono", monospace; text-align: center; color: #222;
`;
const Tick = styled.i`width: 9px; margin-left: 9px; border-top: 1px dotted #888;`;
const Scroll = styled.div`flex: 0 0 15px; background: #f0f0f0; display: flex; flex-direction: column; align-items: center; & > svg { margin: 5px 0; }`;
const Thumb = styled.i`flex: 0 0 123px; align-self: stretch; background: #c8c8c8;`;
const Gap = styled.i`flex: 1;`;
const SideTabs = styled.div`display: flex; flex-direction: column; padding-top: 23px;`;
const SideTab = styled.button<{ $on?: boolean }>`
  height: 113px; width: 18px; writing-mode: vertical-rl; transform: rotate(180deg); text-align: center;
  color: ${p => (p.$on ? '#f2f2f2' : '#b4b4b4')}; background: ${p => (p.$on ? '#5c5c5c' : '#4c4c4c')};
  border: 1px solid #3c3c3c; border-radius: 3px 0 0 3px;
`;

const Canvas = styled.section`flex: 1; position: relative; background: #000; min-width: 0; overflow: hidden;`;
const Overlay = styled.svg`position: absolute; left: 0; top: 0;`;
const Pill = styled.div<{ $y: number; $w: number; $h: number; $line: string; $ink: string; $dash?: number }>`
  position: absolute; left: 201px; top: ${p => p.$y}px; width: ${p => p.$w}px; height: ${p => p.$h}px;
  border: 1px solid ${p => p.$line}; border-radius: 40px; color: ${p => p.$ink}; -webkit-text-stroke: 1px ${p => p.$ink};
  display: grid; grid-template-columns: ${p => (p.$dash ?? 94)}px 106px auto; padding: 2px 0 0 33px; align-items: center;
  font: 200 73px/76px "DejaVu Sans Light", "DejaVu Sans", sans-serif; white-space: nowrap;
`;
const Watermark = styled.div`position: absolute; right: 66px; top: 187px; font: 15px/22px "Noto Sans", sans-serif; color: #5c5c5c;`;
const DocButtons = styled.div`position: absolute; right: 10px; top: 9px; display: flex; gap: 8px;`;
const Cube = styled.div`position: absolute; right: 14px; top: 34px; width: 90px; height: 96px; color: #a8a8a8;`;
const CubeTop = styled.button`
  position: absolute; left: 28px; top: 28px; width: 35px; height: 35px; border: 5px solid #b0b0b0; background: #a4a6a9; color: #333; font-size: 9px; font-weight: 500;
`;
const Wcs = styled.button`
  position: absolute; right: 37px; top: 141px; width: 45px; height: 15px; border-radius: 4px; border: 1px solid #8e9096; background: #787b84; color: #c6c8cc;
  font: 10px/12px Roboto, sans-serif; text-align: left; padding-left: 4px;
`;
const NavBar = styled.div`
  position: absolute; right: 4px; top: 181px; width: 30px; height: 198px; background: #3d3d3d; border: 1px solid #474747; border-radius: 4px;
`;
const Command = styled.form`
  position: absolute; left: 206px; right: 206px; bottom: 0; height: 25px; display: flex; background: #b0b0b0; border: 1px solid #6a6a6a; border-width: 1px 1px 1px 0; border-radius: 3px 0 0 0;
  align-items: center; padding-right: 2px;
`;
const CommandTools = styled.div`
  width: 50px; align-self: stretch; display: flex; align-items: center; gap: 8px; padding-left: 3px; background: linear-gradient(#666, #444); margin-right: 5px;
  &::before { content: ''; width: 4px; height: 16px; background: repeating-linear-gradient(#999 0 1px, transparent 1px 3px); }
`;
const RecentButton = styled.button`display: flex; align-items: center; gap: 3px; flex: none;`;
const CommandInput = styled.input`
  flex: 1; min-width: 0; margin-left: 7px; font: italic 11px/18px "DejaVu Sans Mono", monospace; color: #333;
  &::placeholder { color: #666; opacity: 1; }
`;
const RightBar = styled.aside`
  flex: 0 0 24px; border-left: 2px solid #666; background: #5b5b5b; display: flex; flex-direction: column; align-items: flex-end; overflow: hidden;
  box-shadow: inset 5px 0 0 -1px #3e3e3e;
  &::before { content: ''; flex: none; width: 14px; height: 6px; margin: 1px 1px 1px 0; background: repeating-linear-gradient(#333 0 1px, #777 1px 2px); }
`;
const RightIcon = styled.button`flex: 1 1 0; min-height: 0; display: flex; align-items: center;`;
const RightSep = styled.i`flex: 0 0 6px; width: 17px; border: solid transparent; border-width: 2px 0; background: #ddd; background-clip: padding-box;`;

/* ---------- bottom ---------- */
const Status = styled.footer`flex: none; height: 30px; display: flex; align-items: flex-start; background: #393939; border-top: 1px solid #666; position: relative;`;
const LayoutTabs = styled.div`display: flex; padding-left: 11px; gap: 1px; flex: 1; min-width: 0;`;
const LayoutTab = styled.button<{ $on?: boolean }>`
  height: 16px; padding: 0 11px; border-radius: 0 0 8px 8px; color: ${p => (p.$on ? '#fff' : '#b8b8b8')}; font-weight: ${p => (p.$on ? 700 : 400)};
  background: ${p => (p.$on ? 'linear-gradient(#666, #8c8c8c)' : '#505050')};
`;
const AddLayout = styled(LayoutTab)`padding: 0 7px; font-size: 14px; margin-left: 3px; color: #ddd;`;
const StatusGroup = styled.div<{ $w: number }>`
  flex: 0 0 ${p => p.$w}px; height: 25px; border: 1px solid #6a6a6a; border-right-color: #333; background: #444; display: flex; align-items: center; justify-content: space-around; padding: 0 2px;
  color: #f0f0f0;
`;
const Progress = styled.i`position: absolute; left: 46px; bottom: 0; width: 323px; height: 3px; background: #f6eef2;`;
const Banner = styled.p`
  flex: none; margin: 0; height: 35px; background: #ff0076; color: #fff; text-align: center; font: 700 21px/36px "DejaVu Sans Condensed", "Noto Sans", sans-serif; white-space: nowrap;
`;
const Badge = styled.div`
  position: absolute; right: 59px; top: 139px; width: 134px; height: 27px; border-radius: 14px; background: #fff; color: #333; display: flex; align-items: center; justify-content: center; gap: 10px;
  font: 500 9px/12px Roboto, sans-serif;
`;

const C = (p: { i: string; t: string; d?: boolean; gap?: number }) => (
  <Cmd type="button" $gap={p.gap}><Icon n={p.i} />{p.t}{p.d && <Caret />}</Cmd>
);
const Panel = ({ w, pad, title, menu, children }: { w: number; pad: number; title: string; menu?: boolean; children: ReactNode }) => (
  <PanelBox $w={w}>
    <PanelBody $pad={pad}>{children}</PanelBody>
    <PanelTitle type="button">{title}{menu && <Caret $big />}</PanelTitle>
  </PanelBox>
);
const IconCol = ({ w, items }: { w: number; items: [string, boolean][] }) => (
  <Column $w={w}>{items.map(([i, d]) => <Cmd type="button" $gap={4} key={i} aria-label={i}><Icon n={i} />{d && <Caret />}</Cmd>)}</Column>
);

const menu = ['Home', 'Insert', 'Annotate', 'Modify', 'Analyze', 'View', 'Manage', 'Output', 'Survey', 'Autodesk 360', 'Help', 'Add-ins', 'Express Tools', 'SPDS', 'Featured Apps', 'BIM 360', 'Performance'];

const tree: [number, string, string, string][] = [
  [0, '-', 'doc', 'Drawing1'], [1, '•', 'tPoints', 'Points'], [1, '-', 'tGroup', 'Point Groups'], [2, '•', 'tGroup', '_All Points'],
  [1, '', 'tCloud', 'Point Clouds'], [1, '', 'tSurf', 'Surfaces'], [1, '+', 'tAlign', 'Alignments'], [1, '', 'tFeat', 'Feature Lines'],
  [1, '', 'tSite', 'Sites'], [1, '', 'tCatch', 'Catchments'], [1, '+', 'tPipe', 'Pipe Networks'], [1, '', 'tPipe', 'Pressure Networks'],
  [1, '', 'tCorr', 'Corridors'], [1, '+', 'tAsm', 'Assemblies'],
];
const rail = [...Array(23)].map((_, i) => `s${i + 1}`);

const Chevron = ({ up, c = '#333' }: { up?: boolean; c?: string }) => (
  <svg width="8" height="8" viewBox="0 0 8 8"><path d={up ? 'M1 6l3-3 3 3' : 'M1 2l3 3 3-3'} fill="none" stroke={c} strokeWidth="1.400" /></svg>
);

export default function App() {
  return (
    <Frame>
      <Global />
      <Header>
        <AppButton type="button" aria-label="Application menu"><Icon n="logo" size={25} /><Caret $c="#222" /><span>C3D</span></AppButton>
        <TitleBar>
          <QuickBar>
            {['newFile', 'open', 'save', 'print'].map(i => <IconButton type="button" key={i} aria-label={i}><Icon n={i} size={16} /></IconButton>)}
            <IconButton type="button" aria-label="Undo"><Icon n="undo" size={14} /><Caret /></IconButton>
            <IconButton type="button" aria-label="Redo"><Icon n="redo" size={14} /><Caret $c="#aaa" /></IconButton>
          </QuickBar>
          <Workspace type="button"><Icon n="gear" size={14} /><span>Civil 3D</span><Caret $c="#fff" /></Workspace>
          <Customize type="button" aria-label="Customize"><Caret $c="#fff" /></Customize>
          <Title>Autodesk AutoCAD Civ</Title>
          <Smudge />
          <Search aria-label="Search" placeholder="yword or phrase" />
          <Account>
            <IconButton type="button" aria-label="Find"><Icon n="binoc" /></IconButton>
            <SignIn type="button"><SignInLabel><Icon n="user" />Sign In</SignInLabel><Caret /></SignIn>
            <IconButton type="button" aria-label="Exchange"><Icon n="exchange" size={14} /></IconButton>
            <IconButton type="button" aria-label="Apps"><Icon n="tri" size={16} /><Caret /></IconButton>
            <VLine />
            <IconButton type="button" aria-label="Help"><Icon n="help" size={16} /><Caret /></IconButton>
          </Account>
          <WindowButtons>
            {['wMin', 'wMax', 'wClose'].map(i => <IconButton type="button" key={i} aria-label={i}><Icon n={i} size={12} /></IconButton>)}
          </WindowButtons>
        </TitleBar>
        <Tabs>
          {menu.map((m, i) => <Tab type="button" key={m} $on={i === 0}>{m}</Tab>)}
          <RibbonToggle type="button" aria-label="Minimize ribbon"><Icon n="ribbonBox" size={14} /><Caret /></RibbonToggle>
        </Tabs>
      </Header>

      <Ribbon>
        <Panel w={108} pad={4} title="Palettes" menu>
          <Toolspace type="button"><Icon n="tools" size={34} />Toolspace</Toolspace>
          <IconGrid $cols={2} $w={22}>
            {['tsA', 'yyy', 'survey', 'toolbox', 'sheetA', 'sheetB'].map((i, k) => <Cell type="button" key={i} $on={k < 2} aria-label={i}><Icon n={i} /></Cell>)}
          </IconGrid>
        </Panel>
        <Panel w={128} pad={5} title="Create Ground Data" menu>
          <Column><C i="importS" t="Import Survey Data" /><C i="points" t="Points" d /><C i="surface" t="Surfaces" d /></Column>
        </Panel>
        <Panel w={303} pad={5} title="Create Design" menu>
          <Column $w={100}><C i="parcel" t="Parcel" d /><C i="fline" t="Feature Line" d /><C i="grading" t="Grading" d /></Column>
          <Column $w={92}><C i="align" t="Alignment" d /><C i="profile" t="Profile" d /><C i="corridor" t="Corridor" /></Column>
          <Column><C i="inter" t="Intersections" d /><C i="assembly" t="Assembly" d /><C i="pipes" t="Pipe Network" d /></Column>
        </Panel>
        <Panel w={125} pad={12} title="Profile & Section Views">
          <Column><C i="pview" t="Profile View" d /><C i="sline" t="Sample Lines" /><C i="sview" t="Section Views" d /></Column>
        </Panel>
        <Panel w={111} pad={6} title="Draw" menu>
          <IconCol w={34} items={[['line', true], ['xline', true], ['spline', true]]} />
          <IconCol w={37} items={[['pline', true], ['circle', true], ['ellipse', true]]} />
          <IconCol w={30} items={[['arc', false], ['rect', true], ['hatch', true]]} />
        </Panel>
        <Panel w={166} pad={6} title="Modify" menu>
          <Column $w={67}><C i="move" t="Move" /><C i="copy" t="Copy" /><C i="stretch" t="Stretch" /></Column>
          <IconCol w={28} items={[['rotate', false], ['mirror', false], ['scale', false]]} />
          <IconCol w={38} items={[['trim', true], ['fillet', true], ['array', true]]} />
          <IconCol w={20} items={[['erase', false], ['explode', false], ['offset', false]]} />
        </Panel>
        <Panel w={257} pad={2} title="Layers" menu>
          <BigButton type="button" $w={53}><Icon n="layerProps" size={32} /><span>{'Layer\nProperties'}</span></BigButton>
          <LayerArea>
            <LayerCombo type="button"><Icon n="bulb" size={14} /><Icon n="sun" size={14} /><Icon n="unlock" size={14} /><Swatch /><span>0</span><Caret /></LayerCombo>
            <IconGrid $cols={5} $w={22}>
              {[1, 2, 3, 4, 5, 6, 7, 8, 9, 10].map(k => <Cell type="button" key={k} aria-label={`Layer tool ${k}`}><Icon n={`ly${k}`} /></Cell>)}
            </IconGrid>
          </LayerArea>
        </Panel>
        <Panel w={74} pad={0} title="Clipboard">
          <BigButton type="button" $w={50}><Icon n="paste" size={32} /><span>Paste</span><Caret /></BigButton>
          <IconCol w={20} items={[['cut', false], ['copyc', false], ['match', false]]} />
        </Panel>
      </Ribbon>

      <DocTabs>
        <DocTab type="button" $w={116}>Start</DocTab>
        <DocTab type="button" $on $w={114}><span>Drawing1*</span><Icon n="tabX" size={9} /></DocTab>
        <AddTab type="button" aria-label="New tab">+</AddTab>
      </DocTabs>

      <Main>
        <Side>
          <SidePanel>
            <SideTitle>TOOLSPACE</SideTitle>
            <SideTools>
              <IconButton type="button" aria-label="Item view"><Icon n="tsNew" size={14} /></IconButton>
              <IconButton type="button" aria-label="Preview"><Icon n="tsView" /></IconButton>
              <IconButton type="button" aria-label="Panorama"><Icon n="tsGrid" /></IconButton>
              <HelpBox type="button">?</HelpBox>
            </SideTools>
            <ViewWrap><View aria-label="View"><option>Active Drawing View</option></View><Chevron /></ViewWrap>
            <TreeBox>
              <Tree>
                {tree.map(([lv, ex, ic, t]) => (
                  <Node key={t} $bold={lv === 0}>
                    {[...Array(lv)].map((_, k) => <Guide key={k} $line />)}
                    <Guide $line={lv === 1}>{ex ? <Expander>{ex === '-' ? '−' : ex}</Expander> : <Tick />}</Guide>
                    <Icon n={ic} size={15} />{t}
                  </Node>
                ))}
              </Tree>
              <Scroll><Chevron up /><Thumb /><Gap /><Chevron /></Scroll>
            </TreeBox>
          </SidePanel>
          <SideTabs>
            <SideTab type="button" $on>Prospector</SideTab>
            <SideTab type="button">Settings</SideTab>
          </SideTabs>
        </Side>

        <Canvas>
          <Pill $y={15} $w={524} $h={79} $line="#a032a0" $ink="#0cc814"><span>Z</span><span>−</span><span>18.000</span></Pill>
          <Pill $y={117} $w={661} $h={81} $line="#16802c" $ink="#0a14e6"><span>N</span><span>−</span><span>3444.1122</span></Pill>
          <Pill $y={221} $w={664} $h={79} $line="#b4ac50" $ink="#f50a0a" $dash={88}><span>E</span><span>−</span><span>5786.6713</span></Pill>
          <Overlay width="640" height="494" viewBox="0 0 640 494">
            <path d="M201 295l62 61M263 295l-62 61" stroke="#a81818" strokeWidth="1.200" />
            <circle cx="455" cy="380" r="28" fill="#453f05" />
            <path d="M456 379v16l4-4 3 6 3-1-3-6h5z" fill="#fff" stroke="#222" strokeWidth=".6" />
            <path d="M532.500 352v29M532.500 387v29M500 384.500h29M535 384.500h30" stroke="#eee" strokeWidth="1" />
            <path d="M529.500 381.500h6v6h-6z" fill="none" stroke="#eee" />
            <g fill="none" stroke="#ddd" strokeWidth="1.500"><path d="M14 433v46M14 479h47M10 475h9v9h-9z" /></g>
            <g fill="#ddd" fontFamily="Open Sans" fontWeight="300" fontSize="19"><text x="16" y="429">Y</text><text x="66" y="479">X</text></g>
          </Overlay>
          <Watermark>Hariprasad Chandrasekar</Watermark>
          <DocButtons>{['minimize', 'restore', 'close'].map(i => <IconButton type="button" key={i} aria-label={i}><Icon n={i} size={11} /></IconButton>)}</DocButtons>
          <Cube>
            <svg width="90" height="96" viewBox="0 0 90 96">
              <circle cx="45" cy="46" r="38" fill="none" stroke="#303030" strokeWidth="7" />
              <g fill="#a8a8a8" fontFamily="Liberation Sans" fontWeight="700" fontSize="14" textAnchor="middle"><text x="45" y="13">N</text><text x="7" y="51">W</text><text x="84" y="51">E</text><text x="45" y="90">S</text></g>
            </svg>
            <CubeTop type="button">TOP</CubeTop>
          </Cube>
          <Wcs type="button">WCS</Wcs>
          <NavBar>
            <svg width="28" height="196" viewBox="0 0 28 196" fill="none" stroke="#222" strokeWidth="1.300">
              <circle cx="23" cy="5" r="3" /><path d="M4 24a10 10 0 0 1 10-6h9v9a9 9 0 1 1-19-3z" /><circle cx="14" cy="27" r="5" /><path d="M12 46h5l-2 2z" /><path d="M0 53h28" stroke="#4a4a4a" />
              <path d="M7 72l-4-6 2-1 4 4-2-9 2-1 3 7V57h2l1 9 3-8 2 1-2 9 3-3 1 1-4 9-3 3h-6z" /><path d="M5 85l14 15M19 85L5 100M3 83h4M3 83v4M21 83h-4M21 83v4M3 102v-4" /><circle cx="18" cy="97" r="4.500" /><path d="M21 100l5 5" strokeWidth="2" /><path d="M12 112h5l-2 2z" />
              <path d="M14 120v22M10 124l4-4 4 4M10 138l4 4 4-4M4 130q10 6 20 0M4 130l4-3M4 130l4 4M11 126h6v10h-6z" /><path d="M12 147h5l-2 2z" />
              <path d="M3 158h7v6H3zM11 158h7v6h-7zM19 158h6v6h-6zM3 167h15v12H3zM8 170l6 3-6 3z" /><circle cx="23" cy="191" r="3" />
            </svg>
          </NavBar>
          <Command>
            <CommandTools><IconButton type="button" aria-label="Close"><Icon n="closeDim" size={10} /></IconButton><IconButton type="button" aria-label="Customize"><Icon n="wrench" size={13} /></IconButton></CommandTools>
            <RecentButton type="button" aria-label="Recent commands"><Icon n="prompt" size={14} /><Caret $c="#444" /></RecentButton>
            <CommandInput aria-label="Command" placeholder="Type a command" />
            <svg width="8" height="5" viewBox="0 0 8 5"><path d="M4 0l4 5H0z" fill="#111" /></svg>
          </Command>
        </Canvas>

        <RightBar>
          {rail.map((r, i) => (
            <React.Fragment key={r}>
              <RightIcon type="button" aria-label={`Point tool ${i + 1}`}><Icon n={r} size={16} /></RightIcon>
              {(i === 12 || i === 13 || i === 16) && <RightSep />}
            </React.Fragment>
          ))}
        </RightBar>
      </Main>

      <Status>
        <LayoutTabs>
          <LayoutTab type="button" $on>Model</LayoutTab><LayoutTab type="button">Layout1</LayoutTab><LayoutTab type="button">Layout2</LayoutTab><AddLayout type="button">+</AddLayout>
        </LayoutTabs>
        <StatusGroup $w={46}>MODEL</StatusGroup>
        <StatusGroup $w={62}><Icon n="grid" size={14} /><Icon n="dots" size={14} /><Caret $big /></StatusGroup>
        <StatusGroup $w={97}><Icon n="ortho" size={14} /><Icon n="polar" size={14} /><Caret $big /><Icon n="iso" size={16} /><Caret $big /></StatusGroup>
        <StatusGroup $w={62}><Icon n="angle" size={16} /><Icon n="osnap" size={16} /><Caret $big /></StatusGroup>
        <StatusGroup $w={126}><Icon n="annoB" size={18} /><Icon n="annoG" size={16} /><Icon n="annoW" size={16} /><span>1:1000</span><Caret /></StatusGroup>
        <StatusGroup $w={34}><Icon n="cog" size={12} /><Caret $big /></StatusGroup>
        <StatusGroup $w={25}><Icon n="plus" size={14} /></StatusGroup>
        <StatusGroup $w={65}><Icon n="layersG" size={15} /><span>3.500</span></StatusGroup>
        <StatusGroup $w={25}><Icon n="shapes" size={15} /></StatusGroup>
        <StatusGroup $w={26}><Icon n="bigDot" size={18} /></StatusGroup>
        <StatusGroup $w={42}><Icon n="expand" size={15} /><Icon n="burger" size={14} /></StatusGroup>
        <Progress />
      </Status>
      <Banner>{'Create Manual Point // Create New Point Label Style (Easting, Nothing & Elevation) & Edit Current Selection in Civil 3D'}</Banner>
      <Badge><Icon n="thumb" size={13} /><span>SUBSCRIBED</span><Icon n="bell" size={13} /></Badge>
    </Frame>
  );
}
